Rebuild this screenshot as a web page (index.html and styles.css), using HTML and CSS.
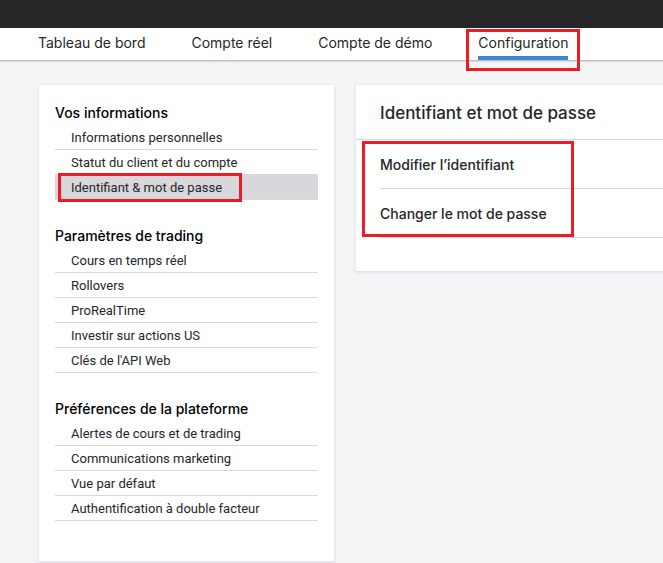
FILE: index.html
```html
<!DOCTYPE html>
<html lang="fr">
<head>
<meta charset="utf-8">
<meta name="viewport" content="width=device-width, initial-scale=1">
<title>Configuration</title>
<link rel="stylesheet" href="styles.css">
</head>
<body>
<div class="topbar"></div>
<nav class="tabs" aria-label="Navigation principale">
  <a class="tab" href="#bord">Tableau de bord</a>
  <a class="tab" href="#reel">Compte réel</a>
  <a class="tab" href="#demo">Compte de démo</a>
  <a class="tab tab-active marked" href="#configuration">Configuration</a>
</nav>
<div class="layout">
  <aside class="card sidebar">
    <section class="group">
      <h2 class="group-title">Vos informations</h2>
      <ul class="menu">
        <li><a class="item" href="#infos">Informations personnelles</a></li>
        <li><a class="item" href="#statut">Statut du client et du compte</a></li>
        <li><a class="item item-active marked" href="#identifiant">Identifiant &amp; mot de passe</a></li>
      </ul>
    </section>
    <section class="group">
      <h2 class="group-title">Paramètres de trading</h2>
      <ul class="menu">
        <li><a class="item" href="#cours">Cours en temps réel</a></li>
        <li><a class="item" href="#rollovers">Rollovers</a></li>
        <li><a class="item" href="#prt">ProRealTime</a></li>
        <li><a class="item" href="#us">Investir sur actions US</a></li>
        <li><a class="item" href="#api">Clés de l'API Web</a></li>
      </ul>
    </section>
    <section class="group">
      <h2 class="group-title">Préférences de la plateforme</h2>
      <ul class="menu">
        <li><a class="item" href="#alertes">Alertes de cours et de trading</a></li>
        <li><a class="item" href="#marketing">Communications marketing</a></li>
        <li><a class="item" href="#vue">Vue par défaut</a></li>
        <li><a class="item" href="#2fa">Authentification à double facteur</a></li>
      </ul>
    </section>
  </aside>
  <main class="card panel">
    <h1 class="panel-title">Identifiant et mot de passe</h1>
    <ul class="actions marked">
      <li><a class="action" href="#modifier">Modifier l’identifiant</a></li>
      <li><a class="action" href="#changer">Changer le mot de passe</a></li>
    </ul>
  </main>
</div>
</body>
</html>
```
FILE: styles.css
```css
*, *::after { box-sizing: border-box; }

body {
  margin: 0;
  background: #f4f5f7;
  color: #262628;
  font-family: Inter, Roboto, sans-serif;
}

a { color: inherit; text-decoration: none; }
ul { list-style: none; margin: 0; padding: 0; }
h1, h2 { margin: 0; }

.topbar { height: 28px; background: #262628; }

.tabs {
  display: flex;
  gap: 46px;
  padding-left: 38px;
  background: #fff;
  border-bottom: 1px solid #bfbfc3;
  box-shadow: 0 1px 1px #dcdde0;
}

.tab {
  border-bottom: 4px solid transparent;
  padding: 3px 0 1px;
  font-size: 14px;
  line-height: 24px;
  white-space: nowrap;
}

.tab-active { border-color: #3a87cf; }

.layout {
  display: flex;
  align-items: flex-start;
  gap: 22px;
  padding: 24px 0 2px 39px;
}

.card {
  background: #fff;
  box-shadow: 0 1px 2px 1px #e2e3e6;
}

.sidebar {
  flex: none;
  width: 295px;
  padding: 15px 16px 40px;
}

.group + .group { margin-top: 23px; }

.group-title {
  color: #000;
  font-size: 14px;
  font-weight: 500;
  line-height: 25px;
}

.item {
  display: block;
  padding: 2px 0 0 16px;
  border-bottom: 1px solid #d9d9dc;
  font-family: Roboto, sans-serif;
  font-size: 13px;
  line-height: 22px;
}

.item-active { background: #d8d7dc; }

.panel {
  flex: 1;
  min-width: 0;
  padding-bottom: 33px;
}

.panel-title {
  padding: 2px 24px 0;
  border-bottom: 1px solid #d9d9dc;
  font-size: 17px;
  font-weight: 500;
  line-height: 52px;
}

.actions { padding-left: 24px; }

.action {
  display: block;
  padding-top: 2px;
  border-bottom: 1px solid #d9d9dc;
  font-size: 14px;
  font-weight: 500;
  line-height: 46px;
}

/* Red frames that point out the steps to follow */
.marked { position: relative; }

.marked::after {
  content: "";
  position: absolute;
  border: 3px solid #ed1c24;
  pointer-events: none;
}

.tab.marked::after { inset: 1px -12px -15px -12px; }
.item.marked::after { top: -2px; bottom: -3px; left: 3px; width: 184px; }
.actions.marked::after { top: 1px; bottom: 1px; left: 6px; width: 212px; }
```
